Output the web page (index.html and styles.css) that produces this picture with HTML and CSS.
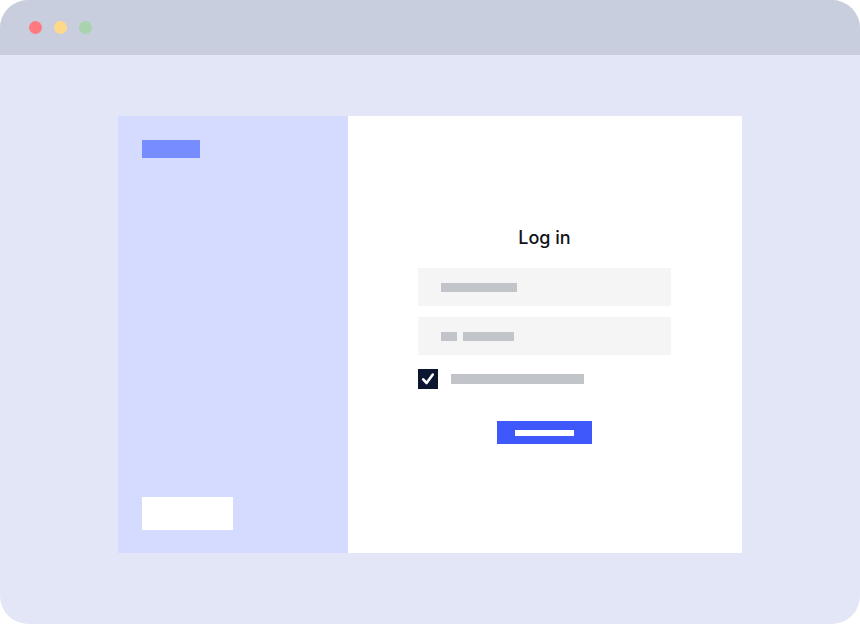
FILE: index.html
```html
<!DOCTYPE html>
<html lang="en">
<head>
<meta charset="utf-8">
<title>Log in</title>
<link rel="stylesheet" href="styles.css">
</head>
<body>
<div class="window">
  <div class="titlebar">
    <span class="dot red"></span>
    <span class="dot yellow"></span>
    <span class="dot green"></span>
  </div>
  <div class="content">
    <div class="card">
      <aside class="side">
        <div class="logo"></div>
        <div class="side-box"></div>
      </aside>
      <main class="main">
        <div class="form">
          <h1 class="title">Log in</h1>
          <div class="input input-first"><span class="bar bar-user"></span></div>
          <div class="input input-second"><span class="bar bar-short"></span><span class="bar bar-pass"></span></div>
          <div class="check-row">
            <span class="checkbox">
              <svg width="20" height="20" viewBox="0 0 20 20"><path d="M5.2 10.4 L8.6 14 L14.8 5.6" fill="none" stroke="#fff" stroke-width="2.6" stroke-linecap="round" stroke-linejoin="round"/></svg>
            </span>
            <span class="bar bar-label"></span>
          </div>
          <div class="button"><span class="button-bar"></span></div>
        </div>
      </main>
    </div>
  </div>
</div>
</body>
</html>
```
FILE: styles.css
```css
* { box-sizing: border-box; }
html, body { margin: 0; padding: 0; background: #ffffff; }
body { font-family: Inter, "Liberation Sans", sans-serif; }

.window {
  width: 860px;
  height: 624px;
  border-radius: 28px;
  background: #e3e6f7;
  overflow: hidden;
  display: flex;
  flex-direction: column;
}

.titlebar {
  height: 55px;
  flex: none;
  background: #c9cedf;
  display: flex;
  align-items: center;
  padding-left: 29px;
  gap: 12px;
}
.dot { width: 13px; height: 13px; border-radius: 50%; display: block; margin-top: -1px; }
.red { background: #ff7a80; }
.yellow { background: #ffd98a; }
.green { background: #a8d3ad; }

.content {
  flex: 1;
  padding: 61px 0 0 118px;
}

.card {
  display: flex;
  width: 624px;
  height: 437px;
}

.side {
  width: 230px;
  flex: none;
  background: #d5dbff;
  padding: 24px 24px 23px 24px;
  display: flex;
  flex-direction: column;
  justify-content: space-between;
}
.logo { width: 58px; height: 18px; background: #768cff; }
.side-box { width: 91px; height: 33px; background: #ffffff; }

.main {
  flex: 1;
  background: #ffffff;
  padding: 110px 71px 0 70px;
}

.form { display: flex; flex-direction: column; }

.title {
  margin: 0 0 18px 0;
  font-size: 18px;
  line-height: 24px;
  font-weight: 500;
  color: #111318;
  text-align: center;
}

.input {
  height: 38px;
  background: #f5f5f5;
  display: flex;
  align-items: center;
  padding-left: 23px;
  gap: 6px;
}
.input-second { margin-top: 11px; }

.bar { display: block; height: 9px; background: #c1c5ca; }
.bar-user { width: 76px; }
.bar-short { width: 16px; }
.bar-pass { width: 51px; }

.check-row {
  margin-top: 14px;
  display: flex;
  align-items: center;
  gap: 13px;
}
.checkbox {
  width: 20px;
  height: 20px;
  background: #0d1631;
  display: block;
}
.checkbox svg { display: block; }
.bar-label { width: 133px; height: 10px; }

.button {
  margin: 32px auto 0 auto;
  width: 95px;
  height: 23px;
  background: #3f58fc;
  display: flex;
  align-items: center;
  justify-content: center;
}
.button-bar { display: block; width: 59px; height: 6px; background: #ffffff; }
```
